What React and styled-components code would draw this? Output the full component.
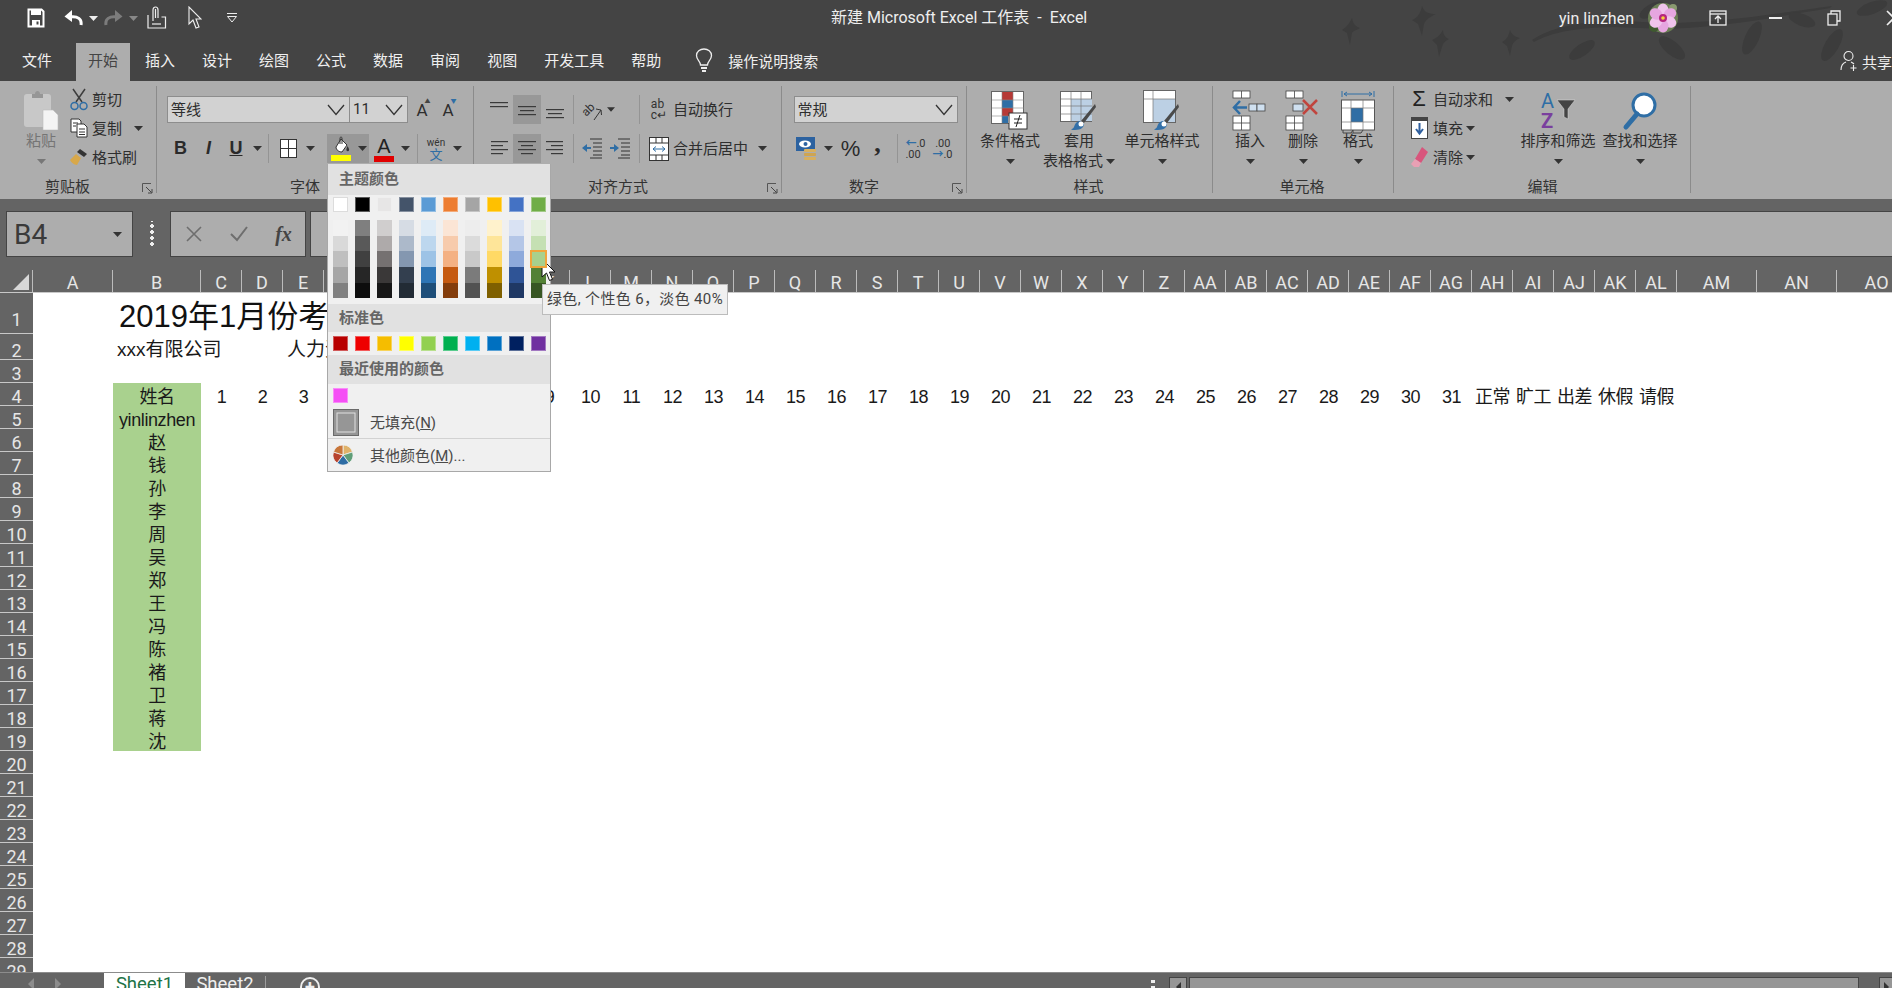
import React from 'react';
import styled, { createGlobalStyle } from 'styled-components';

const UI = '"Roboto","Noto Sans CJK SC",sans-serif';

const Global = createGlobalStyle`
  html, body { margin: 0; padding: 0; background: #fff; }
  * { box-sizing: border-box; }
`;

const colWidths = [80, 88, ...Array(36).fill(41), 80, 80, 80];
const colNames = ['A','B','C','D','E','F','G','H','I','J','K','L','M','N','O','P','Q','R','S','T','U','V','W','X','Y','Z','AA','AB','AC','AD','AE','AF','AG','AH','AI','AJ','AK','AL','AM','AN','AO'];
const people = ['yinlinzhen','赵','钱','孙','李','周','吴','郑','王','冯','陈','褚','卫','蒋','沈'];
const summary = ['正常','旷工','出差','休假','请假'];

const themeBase = ['#ffffff','#000000','#e7e6e6','#44546a','#5b9bd5','#ed7d31','#a5a5a5','#ffc000','#4472c4','#70ad47'];
const themeTints = [
  ['#f2f2f2','#d9d9d9','#bfbfbf','#a6a6a6','#808080'],
  ['#7f7f7f','#595959','#404040','#262626','#0d0d0d'],
  ['#d0cece','#aeaaaa','#757171','#3a3838','#171717'],
  ['#d6dce4','#acb9ca','#8497b0','#333f4f','#222b35'],
  ['#deebf6','#bdd7ee','#9dc3e6','#2e75b5','#1e4e79'],
  ['#fbe5d5','#f7cbac','#f4b183','#c55a11','#833c0b'],
  ['#ededed','#dbdbdb','#c9c9c9','#7b7b7b','#525252'],
  ['#fff2cc','#fee599','#ffd965','#bf9000','#7f6000'],
  ['#d9e2f3','#b4c6e7','#8eaadb','#2f5496','#1f3864'],
  ['#e2efd9','#c5e0b3','#a8d08d','#538135','#375623'],
];
const standard = ['#b80000','#ee0000','#f5bd00','#ffff00','#92d050','#00b050','#00b0f0','#0070c0','#002060','#7030a0'];

const Caret = ({ c = '#333' }) => (
  <svg width="9" height="5" viewBox="0 0 9 5"><path d="M0 0h9L4.5 5z" fill={c} /></svg>
);
const Chevron = () => (
  <svg width="18" height="12" viewBox="0 0 18 12"><path d="M1 1l8 9.5L17 1" fill="none" stroke="#333" strokeWidth="1.3" /></svg>
);
const Launcher = () => (
  <svg width="11" height="11" viewBox="0 0 11 11"><path d="M.5 9V.5H9" fill="none" stroke="#555" /><path d="M4 4l5.5 5.5M10 6v4H6" fill="none" stroke="#444" /></svg>
);
const Lines = ({ widths, top = 2, gap = 4, align = 'center' }) => (
  <svg width="18" height="22" viewBox="0 0 18 22">
    {widths.map((w, i) => {
      const x = align === 'left' ? 1 : align === 'right' ? 17 - w : 9 - w / 2;
      return <rect key={i} x={x} y={top + i * gap} width={w} height="1.2" fill="#3a3a3a" />;
    })}
  </svg>
);
const Brush = ({ x = 0, y = 0 }) => (
  <g transform={`translate(${x} ${y})`}>
    <path d="M24-6l1 3-12 16-3-2z" fill="#4a4a4a" />
    <path d="M9 11l4 3c0 3-3 6-9 6-2 0-3 0-4-.5 3-1 3-3 4-5 1-2 3-3.500 5-3.500z" fill="#3370a8" />
    <circle cx="10" cy="14" r="2.500" fill="#fff" />
  </g>
);

const IconSave = () => (
  <svg width="18" height="20" viewBox="0 0 18 20"><path d="M1.500 1.500h13l2 2v15h-15z" fill="none" stroke="#fff" strokeWidth="2" /><rect x="4" y="2" width="10" height="5" fill="#fff" /><rect x="5" y="12" width="8" height="6" fill="#fff" /><rect x="9.500" y="13.500" width="2" height="3" fill="#444" /></svg>
);
const IconUndo = ({ c = '#fff' }) => (
  <svg width="20" height="18" viewBox="0 0 20 18"><path d="M18 16c1-6-3-9-11-8" fill="none" stroke={c} strokeWidth="3" /><path d="M9 1L1.500 7.500 9 13z" fill={c} /></svg>
);
const IconRedo = () => (
  <svg width="20" height="18" viewBox="0 0 20 18"><path d="M2 16c-1-6 3-9 11-8" fill="none" stroke="#7c7c7c" strokeWidth="3" /><path d="M11 1l7.500 6.500L11 13z" fill="#7c7c7c" /></svg>
);
const IconTouch = () => (
  <svg width="20" height="24" viewBox="0 0 20 24" fill="none" stroke="#eee" strokeWidth="1.200"><path d="M1 9v13h17.500v-11h-4" /><path d="M6 15V4c0-4 5-4 5 0v8M8.500 3v9" /><path d="M5 18h9" /></svg>
);
const IconPointer = () => (
  <svg width="14" height="24" viewBox="0 0 14 24"><path d="M1 1v17l4-4 3 8 3-1-3-8h5z" fill="none" stroke="#eee" strokeWidth="1.100" /></svg>
);
const IconCustomize = () => (
  <svg width="12" height="10" viewBox="0 0 12 10"><path d="M1 .5h10" stroke="#eee" /><path d="M1.500 3.500h9L6 9z" fill="none" stroke="#eee" /></svg>
);
const IconBulb = () => (
  <svg width="18" height="25" viewBox="0 0 18 25" fill="none" stroke="#eee" strokeWidth="1.300"><path d="M5.500 17c0-4-4-5-4-9.500C1.500 3.500 5 1 9 1s7.500 2.500 7.500 6.500c0 4.500-4 5.500-4 9.500z" /><path d="M6 20h6M7 23h4" strokeWidth="2" /></svg>
);
const IconRibbonOpts = () => (
  <svg width="18" height="16" viewBox="0 0 18 16" fill="none" stroke="#eee" strokeWidth="1.300"><rect x="1" y="1" width="16" height="14" /><path d="M1 4h16" /><path d="M9 13V6M6 9l3-3 3 3" /></svg>
);
const IconRestore = () => (
  <svg width="14" height="16" viewBox="0 0 14 16" fill="none" stroke="#eee" strokeWidth="1.300"><rect x="1" y="4" width="9" height="11" /><path d="M4 4V1h9v10h-3" /></svg>
);
const IconPerson = () => (
  <svg width="18" height="22" viewBox="0 0 18 22" fill="none" stroke="#eee" strokeWidth="1.100"><circle cx="8.500" cy="6" r="4.500" /><path d="M1 20c0-4 2-7 5-8M11 12c1 .5 2 1 3 2" /><path d="M13.500 15v6M10.500 18h6" /></svg>
);
const IconAvatar = () => (
  <svg width="30" height="30" viewBox="0 0 30 30">
    <circle cx="15" cy="15" r="15" fill="#6b7f55" />
    <circle cx="6" cy="24" r="5" fill="#3f5a30" />
    <circle cx="25" cy="5" r="4" fill="#8a9a70" />
    {[0, 60, 120, 180, 240, 300].map(a => (
      <ellipse key={a} cx="15" cy="7" rx="5.500" ry="6.500" fill={a % 120 ? '#e6a6e0' : '#f0c4ec'} transform={`rotate(${a} 15 15)`} />
    ))}
    <circle cx="15" cy="15" r="4" fill="#b5267f" />
    <circle cx="15" cy="15" r="1.800" fill="#f4d23c" />
  </svg>
);
const IconPaste = () => (
  <svg width="36" height="40" viewBox="0 0 36 40">
    <rect x="1" y="4" width="27" height="33" rx="3" fill="#c8c8c8" />
    <path d="M9 4h3c0-4 5-4 5 0h3v4H9z" fill="#969696" />
    <path d="M20 20h10l5 5v15H20z" fill="#f4f4f4" stroke="#bdbdbd" strokeWidth=".6" />
  </svg>
);
const IconCut = () => (
  <svg width="18" height="23" viewBox="0 0 18 23" fill="none"><path d="M3 1l9 13M15 1L6 14" stroke="#3d3d3d" strokeWidth="1.500" /><circle cx="4.500" cy="18" r="3.500" stroke="#2f6ea5" strokeWidth="1.500" /><circle cx="13.500" cy="18" r="3.500" stroke="#2f6ea5" strokeWidth="1.500" /></svg>
);
const IconCopy = () => (
  <svg width="18" height="20" viewBox="0 0 18 20"><path d="M1 1h8l2 2v11H1z" fill="#fff" stroke="#333" /><path d="M7 6h7l3 3v10H7z" fill="#fff" stroke="#333" /><path d="M3 5h5M3 8h3M9 11h6M9 14h6M9 16.500h6" stroke="#333" /></svg>
);
const IconPainter = () => (
  <svg width="18" height="18" viewBox="0 0 18 18"><path d="M10 1l7 5-3 3-7-5z" fill="#333" /><path d="M6 6l5 4-4 7c-3 0-6-3-7-5z" fill="#d8a84a" /></svg>
);
const IconBorder = () => (
  <svg width="17" height="19" viewBox="0 0 17 19"><rect x=".5" y=".5" width="16" height="18" fill="#fff" stroke="#333" /><path d="M8.500 0v19M0 9.500h17" stroke="#333" /></svg>
);
const IconFill = () => (
  <svg width="20" height="25" viewBox="0 0 20 25">
    <path d="M10 3l6 6-5 7c-3 0-6-2-6-5z" fill="#fff" stroke="#333" />
    <path d="M9 8V2.500c0-2 2-2 2 0V8" fill="none" stroke="#333" />
    <path d="M16.500 10c1 2 2 3 1.500 4.500-.5 1-2 1-2.500 0-.4-1.500 .5-3 1-4.500z" fill="#333" />
    <rect y="19" width="20" height="6" fill="#ffff00" />
  </svg>
);
const IconOrient = () => (
  <svg width="22" height="24" viewBox="0 0 22 24">
    <text x="1" y="15" transform="rotate(-45 8 12)" fontFamily="Roboto" fontSize="12" fill="#333">ab</text>
    <path d="M13 22L20 12M15 11l5 1 .5 5" fill="none" stroke="#333" />
  </svg>
);
const IconOutdent = () => (
  <svg width="20" height="21" viewBox="0 0 20 21"><path d="M8 1h12M11 5h9M11 9h9M11 13h9M11 17h9M8 20h12" stroke="#333" /><path d="M0 10l5-4v3h4v2H5v3z" fill="#2f6ea5" /></svg>
);
const IconIndent = () => (
  <svg width="20" height="21" viewBox="0 0 20 21"><path d="M8 1h12M11 5h9M11 9h9M11 13h9M11 17h9M8 20h12" stroke="#333" /><path d="M9 10L4 6v3H0v2h4v3z" fill="#2f6ea5" /></svg>
);
const IconMerge = () => (
  <svg width="20" height="24" viewBox="0 0 20 24">
    <rect x=".5" y=".5" width="19" height="23" fill="#fff" stroke="#333" />
    <path d="M7 0v6M13 0v6M7 18v6M13 18v6M0 6h20M0 18h20" stroke="#333" />
    <path d="M4 12h12M4 12l3-2.500M4 12l3 2.500M16 12l-3-2.500M16 12l-3 2.500" fill="none" stroke="#2f6ea5" />
  </svg>
);
const IconCurrency = () => (
  <svg width="20" height="24" viewBox="0 0 20 24">
    <rect width="19" height="14" fill="#2c62a0" />
    <ellipse cx="9" cy="7" rx="6" ry="3.500" fill="#fff" />
    <circle cx="9.500" cy="7" r="2" fill="#2c62a0" />
    <rect x="8" y="12" width="12" height="3" rx="1" fill="#d8b060" />
    <rect x="8" y="16" width="12" height="3" rx="1" fill="#cfa552" />
    <rect x="8" y="20" width="12" height="3" rx="1" fill="#d8b060" />
  </svg>
);
const IconCondFormat = () => (
  <svg width="38" height="40" viewBox="0 0 38 40">
    <rect x=".5" y="1.500" width="32" height="32" fill="#fff" stroke="#666" />
    <rect x="11" y="2" width="11" height="8" fill="#b63a36" /><rect x="11" y="10" width="11" height="8" fill="#2f6ea5" />
    <rect x="11" y="18" width="11" height="8" fill="#b63a36" /><rect x="11" y="26" width="6" height="7" fill="#2f6ea5" />
    <path d="M11 2v31M22 2v31M1 10h32M1 18h32M1 26h32" stroke="#888" strokeWidth=".6" />
    <rect x="18" y="23" width="18" height="16" fill="#fff" stroke="#333" />
    <path d="M23 29h8M23 33h8M29 25l-4 12" stroke="#222" fill="none" />
  </svg>
);
const IconTableFormat = () => (
  <svg width="38" height="42" viewBox="0 0 38 42">
    <rect x=".5" y="1.500" width="31" height="30" fill="#fff" stroke="#666" />
    <rect x="11" y="9" width="21" height="22" fill="#bcd0e4" />
    <path d="M11 2v30M21 2v30M1 9h31M1 16h31M1 24h31" stroke="#777" strokeWidth=".7" />
    <Brush x="11" y="20" />
  </svg>
);
const IconCellStyle = () => (
  <svg width="38" height="42" viewBox="0 0 38 42">
    <rect x=".5" y=".5" width="32" height="32" fill="#fff" stroke="#666" />
    <rect x="10" y="9" width="22" height="23" fill="#bcd0e4" />
    <path d="M10 1v8M1 9h31M10 9v23" stroke="#777" strokeWidth=".7" />
    <Brush x="11" y="20" />
  </svg>
);
const CellBlocks = () => (
  <g fill="#fff" stroke="#444" strokeWidth=".8">
    <rect x="1" y="1" width="17" height="7" /><path d="M9.500 1v7" />
    <rect x="1" y="26" width="17" height="14" /><path d="M9.500 26v14M1 33h17" />
  </g>
);
const IconInsert = () => (
  <svg width="36" height="42" viewBox="0 0 36 42">
    <CellBlocks />
    <rect x="17" y="14" width="8" height="7" fill="#cfe0f0" stroke="#444" strokeWidth=".8" />
    <rect x="25" y="14" width="8" height="7" fill="#cfe0f0" stroke="#444" strokeWidth=".8" />
    <path d="M15 17.500H3M8 11l-6 6.500 6 6.500" fill="none" stroke="#2f6ea5" strokeWidth="2.500" />
  </svg>
);
const IconDelete = () => (
  <svg width="36" height="42" viewBox="0 0 36 42">
    <CellBlocks />
    <rect x="8" y="14" width="10" height="7" fill="#cfe0f0" stroke="#444" strokeWidth=".8" />
    <path d="M18 10l14 14M32 10L18 24" stroke="#c0453e" strokeWidth="2.500" />
  </svg>
);
const IconCellFormat = () => (
  <svg width="34" height="44" viewBox="0 0 34 44">
    <path d="M1 1v6M33 1v6M3 4h28M3 4l3-2M3 4l3 2M31 4l-3-2M31 4l-3 2" fill="none" stroke="#2f6ea5" />
    <rect x=".5" y="10" width="33" height="30" fill="#fff" stroke="#555" />
    <rect x="10" y="18" width="12" height="14" fill="#2f6ea5" />
    <path d="M10 10v30M22 10v30M1 18h33M1 32h33" stroke="#777" strokeWidth=".7" />
    <path d="M2 40v3h8l2-3M12 40v3h8l2-3" fill="none" stroke="#444" />
  </svg>
);
const IconFillDown = () => (
  <svg width="17" height="22" viewBox="0 0 17 22"><rect x=".5" y=".5" width="16" height="21" fill="#fff" stroke="#444" /><rect width="17" height="4" fill="#444" /><path d="M8.500 6v10M5 12l3.500 4.500L12 12" fill="none" stroke="#2f5f9e" strokeWidth="2" /></svg>
);
const IconEraser = () => (
  <svg width="17" height="20" viewBox="0 0 17 20"><path d="M11 0l6 5-7 11-6-4z" fill="#d8557c" /><path d="M4 12l6 4-2 4H3l-3-3z" fill="#e8a0b4" /></svg>
);
const IconSort = () => (
  <svg width="36" height="42" viewBox="0 0 36 42">
    <text x="1" y="18" fontFamily="Roboto" fontSize="20" fill="#2f6ea5">A</text>
    <text x="1" y="38" fontFamily="Roboto" fontSize="20" fontWeight="700" fill="#7a3f9e">Z</text>
    <path d="M17 10h18l-7 9v10l-4-2v-8z" fill="#444" stroke="#ddd" strokeWidth=".5" />
  </svg>
);
const IconFind = () => (
  <svg width="36" height="42" viewBox="0 0 36 42">
    <circle cx="22" cy="15" r="11" fill="#fff" stroke="#2f6ea5" strokeWidth="3" />
    <path d="M15 24L4 37" stroke="#2f6ea5" strokeWidth="5" strokeLinecap="round" />
  </svg>
);
const IconCross = () => (
  <svg width="16" height="16" viewBox="0 0 16 16"><path d="M1 1l14 14M15 1L1 15" stroke="#6e6e6e" strokeWidth="1.600" /></svg>
);
const IconCheck = () => (
  <svg width="18" height="16" viewBox="0 0 18 16"><path d="M1 8l6 6L17 1" fill="none" stroke="#6e6e6e" strokeWidth="2" /></svg>
);
const IconNoFill = () => (
  <svg width="26" height="27" viewBox="0 0 26 27"><rect x=".5" y=".5" width="25" height="26" fill="#969696" stroke="#6a6a6a" /><rect x="4" y="4" width="18" height="19" fill="none" stroke="#e0e0e0" /></svg>
);
const IconWheel = () => (
  <svg width="20" height="20" viewBox="0 0 20 20" stroke="#f0f0f0" strokeWidth=".8">
    <path d="M10 10L10 0A10 10 0 0 1 19.500 7z" fill="#dfb26a" />
    <path d="M10 10L19.500 7A10 10 0 0 1 15.900 18z" fill="#5f9e78" />
    <path d="M10 10L15.900 18A10 10 0 0 1 4.100 18z" fill="#2e6ca4" />
    <path d="M10 10L4.100 18A10 10 0 0 1 .5 7z" fill="#b8432e" />
    <path d="M10 10L.5 7A10 10 0 0 1 10 0z" fill="#c8763a" />
  </svg>
);
const IconCursor = () => (
  <svg width="15" height="24" viewBox="0 0 15 24"><path d="M1 1v18l4.500-4 3 7.500 3-1.200-3-7.300H14z" fill="#fff" stroke="#111" /></svg>
);
const TitleDecor = () => (
  <svg width="560" height="81" viewBox="0 0 560 81" fill="#3c3c3c">
    <path d="M10 30c6-4 8-8 10-12 1 6 3 8 8 10-3 2-6 2-8 5l-2 12-3-12z" />
    <path d="M80 20c6-2 9-8 10-14 2 6 6 8 14 8-6 3-10 5-12 10l-2 12-4-12z" />
    <path d="M100 40c5-2 8-5 11-10 0 5 3 8 6 9-4 2-6 4-7 8l-3 10-2-12z" />
    <path d="M170 42c6-3 7-8 8-12 2 5 5 7 10 8-4 2-7 4-8 8l-2 10-3-10z" />
    <path d="M200 40c20-14 60-22 110-18 60 4 130-8 190-16l-2 2c-60 10-130 24-190 20-50-3-85 2-106 14z" />
    <ellipse cx="250" cy="50" rx="15" ry="6" transform="rotate(-35 250 50)" />
    <ellipse cx="320" cy="10" rx="14" ry="6" transform="rotate(-30 320 10)" />
    <ellipse cx="340" cy="48" rx="16" ry="7" transform="rotate(40 340 48)" />
    <ellipse cx="420" cy="38" rx="18" ry="7" transform="rotate(-65 420 38)" />
    <ellipse cx="470" cy="20" rx="14" ry="6" transform="rotate(20 470 20)" />
    <ellipse cx="500" cy="45" rx="18" ry="7" transform="rotate(-60 500 45)" />
    <ellipse cx="540" cy="8" rx="16" ry="6" transform="rotate(-20 540 8)" />
  </svg>
);

function ColorPopup() {
  return (
    <Popup>
      <PopupHeading>主题颜色</PopupHeading>
      <SwatchRow $top={2}>
        {themeBase.map(c => <Swatch key={c} $c={c} />)}
      </SwatchRow>
      <SwatchRow $top={8}>
        {themeTints.map((col, i) => (
          <TintColumn key={i}>
            {col.map(c => <Tint key={c} $c={c} $active={c === '#a8d08d'} />)}
          </TintColumn>
        ))}
      </SwatchRow>
      <PopupHeading $h={28} $top={6}>标准色</PopupHeading>
      <SwatchRow $top={4}>
        {standard.map(c => <Swatch key={c} $c={c} />)}
      </SwatchRow>
      <PopupHeading $h={29} $top={4}>最近使用的颜色</PopupHeading>
      <SwatchRow $top={4}>
        <Swatch $c="#f54ff5" />
      </SwatchRow>
      <PopupItem $top={5} $h={28}>
        <IconNoFill />
        <PopupItemText $gap={11}>无填充(<u>N</u>)</PopupItemText>
      </PopupItem>
      <PopupRule />
      <PopupItem $h={32}>
        <IconWheel />
        <PopupItemText $gap={17}>其他颜色(<u>M</u>)...</PopupItemText>
      </PopupItem>
    </Popup>
  );
}

function SheetRow({ label, h, lift, children }) {
  return (
    <Row $h={h}>
      <RowHead $lift={lift}>{label}</RowHead>
      {children}
    </Row>
  );
}

export default function App() {
  const rowsBelow = Array.from({ length: 10 }, (_, i) => 20 + i);

  return (
    <Page>
      <Global />
      <TopBand>
        <DecorLayer><TitleDecor /></DecorLayer>
        <TitleBar>
          <Qat>
            <QatSlot $w={28}><IconSave /></QatSlot>
            <QatSlot $w={30} $ml={8}><IconUndo /></QatSlot>
            <QatSlot $w={10}><Caret c="#eee" /></QatSlot>
            <QatSlot $w={24} $ml={4}><IconRedo /></QatSlot>
            <QatSlot $w={14}><Caret c="#888" /></QatSlot>
            <QatSlot $w={22} $ml={6}><IconTouch /></QatSlot>
            <QatSlot $w={22} $ml={16}><IconPointer /></QatSlot>
            <QatSlot $w={16} $ml={18}><IconCustomize /></QatSlot>
          </Qat>
          <WindowTitle>新建 Microsoft Excel 工作表&nbsp; - &nbsp;Excel</WindowTitle>
          <WindowControls>
            <UserName>yin linzhen</UserName>
            <IconAvatar />
            <ControlSlot $ml={28}><IconRibbonOpts /></ControlSlot>
            <ControlSlot $ml={33}><MinimizeBar /></ControlSlot>
            <ControlSlot $ml={35}><IconRestore /></ControlSlot>
            <ControlSlot $ml={36}><IconCross /></ControlSlot>
          </WindowControls>
        </TitleBar>
        <TabBar>
          {['文件','开始','插入','设计','绘图','公式','数据','审阅','视图','开发工具','帮助'].map((t, i) => (
            <Tab key={t} $active={t === '开始'} $first={i === 0}>{t}</Tab>
          ))}
          <SearchHint>
            <IconBulb />
            <span>操作说明搜索</span>
          </SearchHint>
          <ShareButton>
            <IconPerson />
            <span>共享</span>
          </ShareButton>
        </TabBar>
      </TopBand>

      <Ribbon>
        <Group $w={157}>
          <GroupBody>
            <BigColumn $w={66} $pl={8} $dim>
              <BigIcon><IconPaste /></BigIcon>
              <BigText>粘贴</BigText>
              <BigText><Caret c="#777" /></BigText>
            </BigColumn>
            <SmallColumn>
              <SmallRow><IconSlot $w={26}><IconCut /></IconSlot><SmallLabel>剪切</SmallLabel></SmallRow>
              <SmallRow><IconSlot $w={26}><IconCopy /></IconSlot><SmallLabel>复制</SmallLabel><CaretSlot $ml={12}><Caret /></CaretSlot></SmallRow>
              <SmallRow><IconSlot $w={26}><IconPainter /></IconSlot><SmallLabel>格式刷</SmallLabel></SmallRow>
            </SmallColumn>
          </GroupBody>
          <GroupLabel $pr={22}>剪贴板</GroupLabel>
          <LauncherSlot><Launcher /></LauncherSlot>
        </Group>

        <Group $w={317}>
          <RowsBody $pl={10} $pt={15}>
            <ControlRow $h={27}>
              <Field $w={183}><SmallLabel>等线</SmallLabel><Chevron /></Field>
              <Field $w={59}><SmallLabel>11</SmallLabel><Chevron /></Field>
              <IconSlot $w={26} $ml={2}><BumpA>A<BumpMark>▲</BumpMark></BumpA></IconSlot>
              <IconSlot $w={26}><BumpA>A<BumpMark $blue>▼</BumpMark></BumpA></IconSlot>
            </ControlRow>
            <ControlRow $h={29} $top={11}>
              <IconSlot $w={27}><Glyph $bold>B</Glyph></IconSlot>
              <IconSlot $w={29}><Glyph $italic $bold>I</Glyph></IconSlot>
              <IconSlot $w={26}><Glyph $under $bold>U</Glyph></IconSlot>
              <IconSlot $w={17}><Caret /></IconSlot>
              <Divider $w={5} />
              <IconSlot $w={34}><IconBorder /></IconSlot>
              <IconSlot $w={10}><Caret /></IconSlot>
              <IconSlot $w={12} />
              <PressedButton $w={42}>
                <IconSlot $w={28}><IconFill /></IconSlot>
                <IconSlot $w={14}><Caret /></IconSlot>
              </PressedButton>
              <IconSlot $w={30}><FontColor>A</FontColor></IconSlot>
              <IconSlot $w={12}><Caret /></IconSlot>
              <Divider $w={12} />
              <IconSlot $w={26}><Phonetic>wén<PhoneticHan>文</PhoneticHan></Phonetic></IconSlot>
              <IconSlot $w={16}><Caret /></IconSlot>
            </ControlRow>
          </RowsBody>
          <GroupLabel $pr={21}>字体</GroupLabel>
          <LauncherSlot $hidden><Launcher /></LauncherSlot>
        </Group>

        <Group $w={308}>
          <RowsBody $pl={11} $pt={14}>
            <ControlRow $h={29}>
              <IconSlot $w={28}><Lines widths={[18, 18]} top={3} /></IconSlot>
              <PressedButton $w={28} $center><Lines widths={[18, 14, 18]} top={7} /></PressedButton>
              <IconSlot $w={28}><Lines widths={[18, 14, 18]} top={10} /></IconSlot>
              <Divider $w={8} />
              <IconSlot $w={30}><IconOrient /></IconSlot>
              <IconSlot $w={8}><Caret /></IconSlot>
              <Divider $w={10} $ml={19} />
              <IconSlot $w={24} $ml={3}><Wrap>ab<br />c↵</Wrap></IconSlot>
              <SmallLabel $ml={2}>自动换行</SmallLabel>
            </ControlRow>
            <ControlRow $h={29} $top={10}>
              <IconSlot $w={28}><Lines widths={[18, 12, 18, 12]} align="left" top={3} /></IconSlot>
              <PressedButton $w={28} $center><Lines widths={[18, 12, 18, 12]} top={3} /></PressedButton>
              <IconSlot $w={28}><Lines widths={[18, 12, 18, 12]} align="right" top={3} /></IconSlot>
              <Divider $w={8} />
              <IconSlot $w={29}><IconOutdent /></IconSlot>
              <IconSlot $w={28}><IconIndent /></IconSlot>
              <Divider $w={10} />
              <IconSlot $w={24} $ml={3}><IconMerge /></IconSlot>
              <SmallLabel $ml={2}>合并后居中</SmallLabel>
              <CaretSlot $ml={10}><Caret /></CaretSlot>
            </ControlRow>
          </RowsBody>
          <GroupLabel $pr={20}>对齐方式</GroupLabel>
          <LauncherSlot><Launcher /></LauncherSlot>
        </Group>

        <Group $w={185}>
          <RowsBody $pl={11.5} $pt={15}>
            <ControlRow $h={27}>
              <Field $w={164}><SmallLabel>常规</SmallLabel><Chevron /></Field>
            </ControlRow>
            <ControlRow $h={29} $top={11}>
              <IconSlot $w={25}><IconCurrency /></IconSlot>
              <IconSlot $w={20}><Caret /></IconSlot>
              <IconSlot $w={24}><Glyph $big>%</Glyph></IconSlot>
              <IconSlot $w={30}><Comma>,</Comma></IconSlot>
              <Divider $w={10} />
              <IconSlot $w={26}><Decimal><b>←</b>.0<br />.00</Decimal></IconSlot>
              <IconSlot $w={28}><Decimal>&nbsp;.00<br /><b>→</b>.0</Decimal></IconSlot>
            </ControlRow>
          </RowsBody>
          <GroupLabel $pr={21}>数字</GroupLabel>
          <LauncherSlot><Launcher /></LauncherSlot>
        </Group>

        <Group $w={246}>
          <GroupBody $pl={10}>
            <BigColumn $w={66}>
              <BigIcon><IconCondFormat /></BigIcon>
              <BigText>条件格式</BigText>
              <BigText><Caret /></BigText>
            </BigColumn>
            <BigColumn $w={72}>
              <BigIcon><IconTableFormat /></BigIcon>
              <BigText>套用</BigText>
              <BigText>表格格式<CaretSlot $ml={3}><Caret /></CaretSlot></BigText>
            </BigColumn>
            <BigColumn $w={94}>
              <BigIcon><IconCellStyle /></BigIcon>
              <BigText>单元格样式</BigText>
              <BigText><Caret /></BigText>
            </BigColumn>
          </GroupBody>
          <GroupLabel $pr={3}>样式</GroupLabel>
        </Group>

        <Group $w={181}>
          <GroupBody $pl={7}>
            <BigColumn $w={60}>
              <BigIcon><IconInsert /></BigIcon>
              <BigText>插入</BigText>
              <BigText><Caret /></BigText>
            </BigColumn>
            <BigColumn $w={46}>
              <BigIcon><IconDelete /></BigIcon>
              <BigText>删除</BigText>
              <BigText><Caret /></BigText>
            </BigColumn>
            <BigColumn $w={64}>
              <BigIcon><IconCellFormat /></BigIcon>
              <BigText>格式</BigText>
              <BigText><Caret /></BigText>
            </BigColumn>
          </GroupBody>
          <GroupLabel $pr={3}>单元格</GroupLabel>
        </Group>

        <Group $w={297}>
          <GroupBody $pl={13}>
            <SmallColumn $w={110}>
              <SmallRow><IconSlot $w={24} $ml={0}><Sigma>Σ</Sigma></IconSlot><SmallLabel $ml={2}>自动求和</SmallLabel><CaretSlot $ml={12}><Caret /></CaretSlot></SmallRow>
              <SmallRow><IconSlot $w={24}><IconFillDown /></IconSlot><SmallLabel $ml={2}>填充</SmallLabel><CaretSlot $ml={3}><Caret /></CaretSlot></SmallRow>
              <SmallRow><IconSlot $w={24}><IconEraser /></IconSlot><SmallLabel $ml={2}>清除</SmallLabel><CaretSlot $ml={3}><Caret /></CaretSlot></SmallRow>
            </SmallColumn>
            <BigColumn $w={82}>
              <BigIcon><IconSort /></BigIcon>
              <BigText>排序和筛选</BigText>
              <BigText><Caret /></BigText>
            </BigColumn>
            <BigColumn $w={82}>
              <BigIcon><IconFind /></BigIcon>
              <BigText>查找和选择</BigText>
              <BigText><Caret /></BigText>
            </BigColumn>
          </GroupBody>
          <GroupLabel>编辑</GroupLabel>
        </Group>
      </Ribbon>

      <FormulaBar>
        <NameBox>B4<Caret /></NameBox>
        <FormulaDots />
        <FuncBox>
          <IconSlot $w={45}><IconCross /></IconSlot>
          <IconSlot $w={45}><IconCheck /></IconSlot>
          <IconSlot $w={45}><FxMark>fx</FxMark></IconSlot>
        </FuncBox>
        <FormulaInput />
      </FormulaBar>

      <ColumnHeader>
        <Corner />
        {colNames.map((n, i) => <ColumnHead key={n} $w={colWidths[i]}>{n}</ColumnHead>)}
      </ColumnHeader>

      <SheetBody>
        <SheetRow label="1" h={41} lift={5}>
          <Cell $w={colWidths[0]} />
          <TitleCell>2019年1月份考勤表</TitleCell>
        </SheetRow>
        <SheetRow label="2" h={26}>
          <Cell $w={colWidths[0]} />
          <TextCell $w={colWidths[1]}>xxx有限公司</TextCell>
          <Cell $w={colWidths[2]} />
          <Cell $w={colWidths[3]} />
          <TextCell $w={colWidths[4]} $pl={4}>人力资源部</TextCell>
        </SheetRow>
        <SheetRow label="3" />
        <SheetRow label="4">
          <Cell $w={colWidths[0]} />
          <Cell $w={colWidths[1]} $green>姓名</Cell>
          {Array.from({ length: 31 }, (_, i) => <Cell key={i} $w={41}>{i + 1}</Cell>)}
          {summary.map(s => <Cell key={s} $w={41}>{s}</Cell>)}
        </SheetRow>
        {people.map((name, i) => (
          <SheetRow key={name} label={i + 5}>
            <Cell $w={colWidths[0]} />
            <Cell $w={colWidths[1]} $green>{name}</Cell>
          </SheetRow>
        ))}
        {rowsBelow.map(n => <SheetRow key={n} label={n} />)}
      </SheetBody>

      <BottomBar>
        <SheetNav>
          <NavArrow $left />
          <NavArrow />
        </SheetNav>
        <SheetTab $active>Sheet1</SheetTab>
        <SheetTab>Sheet2</SheetTab>
        <AddSheet>+</AddSheet>
        <ScrollDots />
        <ScrollButton $w={18}><ScrollArrow $left /></ScrollButton>
        <ScrollThumb />
        <ScrollButton $w={15}><ScrollArrow /></ScrollButton>
      </BottomBar>

      <ColorPopup />
      <Tooltip>绿色, 个性色 6，淡色 40%</Tooltip>
      <CursorMark><IconCursor /></CursorMark>
    </Page>
  );
}

const Page = styled.div`
  position: relative;
  width: 1892px;
  height: 988px;
  overflow: hidden;
  display: flex;
  flex-direction: column;
  background: #fff;
  font-family: ${UI};
  font-size: 15px;
  color: #2e2e2e;
`;

const TopBand = styled.div`
  position: relative;
  background: #444;
  flex: none;
`;

const DecorLayer = styled.div`
  position: absolute;
  right: 0;
  top: 0;
  line-height: 0;
`;

const TitleBar = styled.div`
  position: relative;
  height: 43px;
  display: grid;
  grid-template-columns: 831px auto 1fr;
  align-items: start;
`;

const Qat = styled.div`
  display: flex;
  align-items: center;
  height: 36px;
  padding-left: 22px;
`;

const QatSlot = styled.div`
  width: ${p => p.$w}px;
  margin-left: ${p => p.$ml || 0}px;
  display: flex;
  justify-content: center;
  align-items: center;
`;

const WindowTitle = styled.div`
  color: #eee;
  font-size: 16px;
  line-height: 36px;
  white-space: pre;
`;

const WindowControls = styled.div`
  display: flex;
  align-items: center;
  justify-content: flex-end;
  height: 36px;
  margin-right: -14px;
`;

const UserName = styled.div`
  color: #eee;
  font-size: 16px;
  margin-right: 14px;
`;

const ControlSlot = styled.div`
  width: 24px;
  margin-left: ${p => p.$ml || 0}px;
  display: flex;
  justify-content: center;
  & path[stroke="#6e6e6e"] { stroke: #eee; }
`;

const MinimizeBar = styled.div`
  width: 13px;
  height: 2px;
  background: #eee;
`;

const TabBar = styled.div`
  position: relative;
  height: 38px;
  display: flex;
  padding-left: 10px;
  gap: 3px;
`;

const Tab = styled.div`
  height: 38px;
  padding: 0 12px;
  margin-right: ${p => (p.$first ? 9 : 0)}px;
  line-height: 36px;
  font-size: 15px;
  background: ${p => (p.$active ? '#adadad' : 'transparent')};
  color: ${p => (p.$active ? '#444' : '#f0f0f0')};
`;

const SearchHint = styled.div`
  display: flex;
  align-items: center;
  gap: 15px;
  margin-left: 19px;
  padding-bottom: 2px;
  color: #eee;
  height: 36px;
`;

const ShareButton = styled.div`
  display: flex;
  align-items: center;
  gap: 4px;
  margin-left: auto;
  margin-right: 0;
  color: #eee;
  height: 36px;
`;

const Ribbon = styled.div`
  display: flex;
  height: 118px;
  flex: none;
  background: #adadad;
`;

const Group = styled.section`
  position: relative;
  width: ${p => p.$w}px;
  flex: none;
  display: flex;
  flex-direction: column;
  &::after {
    content: '';
    position: absolute;
    right: 0;
    top: 5px;
    bottom: 6px;
    width: 1px;
    background: #8b8b8b;
  }
`;

const GroupBody = styled.div`
  display: flex;
  padding-left: ${p => p.$pl || 0}px;
`;

const RowsBody = styled.div`
  padding: ${p => p.$pt}px 0 0 ${p => p.$pl}px;
`;

const GroupLabel = styled.div`
  margin-top: auto;
  padding: 0 ${p => p.$pr || 0}px 5px 0;
  line-height: 14px;
  text-align: center;
  color: #333;
`;

const LauncherSlot = styled.div`
  position: absolute;
  right: 4px;
  bottom: 5px;
  line-height: 0;
  visibility: ${p => (p.$hidden ? 'hidden' : 'visible')};
`;

const BigColumn = styled.div`
  width: ${p => p.$w + (p.$pl || 0)}px;
  padding: 9px 0 0 ${p => p.$pl || 0}px;
  display: flex;
  flex-direction: column;
  align-items: center;
  color: ${p => (p.$dim ? '#757575' : 'inherit')};
  white-space: nowrap;
`;

const BigIcon = styled.div`
  height: 41px;
  display: flex;
  align-items: flex-start;
  justify-content: center;
`;

const BigText = styled.div`
  height: 20px;
  line-height: 20px;
  display: flex;
  align-items: center;
  justify-content: center;
`;

const SmallColumn = styled.div`
  width: ${p => (p.$w ? `${p.$w}px` : 'auto')};
  padding-top: 3.5px;
  margin-left: ${p => (p.$w ? 0 : -8)}px;
`;

const SmallRow = styled.div`
  height: 29px;
  display: flex;
  align-items: center;
  white-space: nowrap;
`;

const IconSlot = styled.div`
  width: ${p => p.$w}px;
  margin-left: ${p => p.$ml || 0}px;
  height: 100%;
  flex: none;
  display: flex;
  align-items: center;
  justify-content: center;
`;

const CaretSlot = styled.span`
  margin-left: ${p => p.$ml || 0}px;
  display: inline-flex;
  align-items: center;
`;

const SmallLabel = styled.span`
  margin-left: ${p => p.$ml || 0}px;
  padding-bottom: 2px;
  white-space: nowrap;
`;

const ControlRow = styled.div`
  height: ${p => p.$h}px;
  margin-top: ${p => p.$top || 0}px;
  display: flex;
  align-items: center;
`;

const Field = styled.div`
  width: ${p => p.$w}px;
  height: 100%;
  flex: none;
  margin-right: -1px;
  background: #d2d2d2;
  border: 1px solid #8d8d8d;
  padding: 0 4px 0 3px;
  display: flex;
  align-items: center;
  justify-content: space-between;
`;

const BumpA = styled.span`
  position: relative;
  font-size: 17px;
`;

const BumpMark = styled.span`
  position: absolute;
  left: 8px;
  top: -4px;
  font-size: 6px;
  color: ${p => (p.$blue ? '#2f6ea5' : '#444')};
`;

const Glyph = styled.span`
  font-family: "Liberation Sans", sans-serif;
  font-size: ${p => (p.$big ? 22 : 18)}px;
  font-weight: ${p => (p.$bold ? 700 : 400)};
  font-style: ${p => (p.$italic ? 'italic' : 'normal')};
  text-decoration: ${p => (p.$under ? 'underline' : 'none')};
  color: #2a2a2a;
`;

const Comma = styled.span`
  font-family: "Liberation Serif", serif;
  font-size: 26px;
  font-weight: 700;
  line-height: 14px;
  padding-bottom: 10px;
  color: #2a2a2a;
`;

const PressedButton = styled.div`
  width: ${p => p.$w}px;
  height: 100%;
  flex: none;
  display: flex;
  align-items: center;
  justify-content: ${p => (p.$center ? 'center' : 'flex-start')};
  background: #989898;
`;

const FontColor = styled.span`
  display: inline-block;
  width: 20px;
  font-family: "Liberation Sans", sans-serif;
  font-size: 20px;
  line-height: 20px;
  text-align: center;
  color: #222;
  border-bottom: 6px solid #e00000;
`;

const Phonetic = styled.span`
  display: flex;
  flex-direction: column;
  align-items: center;
  font-size: 10px;
  line-height: 11px;
  color: #333;
`;

const PhoneticHan = styled.span`
  font-size: 13px;
  line-height: 13px;
  color: #2f6ea5;
`;

const Divider = styled.div`
  width: ${p => p.$w}px;
  margin-left: ${p => p.$ml || 0}px;
  height: 100%;
  flex: none;
  display: flex;
  justify-content: center;
  &::before {
    content: '';
    width: 1px;
    background: #949494;
  }
`;

const Wrap = styled.span`
  font-size: 12px;
  line-height: 11px;
  color: #333;
`;

const Decimal = styled.span`
  font-size: 11px;
  line-height: 11px;
  color: #333;
  white-space: nowrap;
  & b { color: #2f6ea5; }
`;

const Sigma = styled.span`
  font-family: "Liberation Sans", sans-serif;
  font-size: 22px;
  color: #222;
`;

const FormulaBar = styled.div`
  height: 71px;
  flex: none;
  background: #646464;
  padding: 12px 0 13px 6px;
  display: flex;
`;

const NameBox = styled.div`
  width: 127px;
  background: #adadad;
  border: 1px solid #444;
  padding: 0 10px 0 7px;
  display: flex;
  align-items: center;
  justify-content: space-between;
  font-size: 28px;
  color: #3a3a3a;
`;

const FormulaDots = styled.div`
  width: 37px;
  background:
    radial-gradient(circle, #eee 1.600px, transparent 2px) center 14px / 4px 6px repeat-y;
  margin: 10px 0;
`;

const FuncBox = styled.div`
  width: 136px;
  background: #adadad;
  border: 1px solid #444;
  display: flex;
`;

const FxMark = styled.span`
  font-family: "Liberation Serif", serif;
  font-style: italic;
  font-weight: 700;
  font-size: 20px;
  color: #444;
`;

const FormulaInput = styled.div`
  flex: 1;
  margin-left: 4px;
  background: #adadad;
  border-top: 1px solid #444;
  border-bottom: 1px solid #444;
  border-left: 1px solid #444;
`;

const ColumnHeader = styled.div`
  height: 23px;
  flex: none;
  display: flex;
  background: #646464;
  border-bottom: 1px solid #c8c8c8;
  overflow: hidden;
`;

const Corner = styled.div`
  width: 33px;
  flex: none;
  border-right: 1px solid #bcbcbc;
  position: relative;
  &::after {
    content: '';
    position: absolute;
    right: 3px;
    bottom: 2px;
    border-style: solid;
    border-width: 0 0 16px 16px;
    border-color: transparent transparent #d8d8d8 transparent;
  }
`;

const ColumnHead = styled.div`
  width: ${p => p.$w}px;
  flex: none;
  border-right: 1px solid #bcbcbc;
  text-align: center;
  color: #e6e6e6;
  font-size: 18px;
  line-height: 25px;
`;

const SheetBody = styled.div`
  flex: 1;
  min-height: 0;
  overflow: hidden;
`;

const Row = styled.div`
  height: ${p => p.$h || 23}px;
  display: flex;
`;

const RowHead = styled.div`
  width: 33px;
  flex: none;
  background: #646464;
  border-bottom: 1px solid #c8c8c8;
  padding-bottom: ${p => p.$lift || 0}px;
  display: flex;
  align-items: flex-end;
  justify-content: center;
  color: #e6e6e6;
  font-size: 18px;
  line-height: 17px;
`;

const Cell = styled.div`
  width: ${p => p.$w}px;
  flex: none;
  background: ${p => (p.$green ? '#a9d18e' : 'transparent')};
  text-align: center;
  font-family: "Liberation Sans", "Noto Sans CJK SC", sans-serif;
  font-size: 18px;
  line-height: 29px;
  letter-spacing: -0.4px;
  color: #1a1a1a;
  white-space: nowrap;
`;

const TitleCell = styled.div`
  padding: 5px 0 0 6px;
  font-family: "Liberation Sans", "Noto Sans CJK SC", sans-serif;
  font-size: 31px;
  line-height: 38px;
  color: #111;
  white-space: nowrap;
`;

const TextCell = styled.div`
  width: ${p => p.$w}px;
  flex: none;
  padding-left: ${p => p.$pl ?? 4}px;
  font-family: "Liberation Sans", "Noto Sans CJK SC", sans-serif;
  font-size: 19px;
  line-height: 32px;
  color: #1a1a1a;
  white-space: nowrap;
`;

const BottomBar = styled.div`
  height: 16px;
  flex: none;
  display: flex;
  background: #646464;
  border-top: 1px solid #8c8c8c;
  overflow: hidden;
`;

const SheetNav = styled.div`
  width: 104px;
  flex: none;
  display: flex;
  gap: 21px;
  padding: 5px 0 0 26px;
`;

const NavArrow = styled.div`
  width: 0;
  height: 0;
  border-style: solid;
  border-width: 6px;
  border-color: transparent;
  ${p => (p.$left ? 'border-right-color: #8c8c8c; margin-left: -4px;' : 'border-left-color: #8c8c8c;')}
`;

const SheetTab = styled.div`
  width: 81px;
  flex: none;
  margin-top: ${p => (p.$active ? -1 : 0)}px;
  background: ${p => (p.$active ? '#fff' : 'transparent')};
  color: ${p => (p.$active ? '#217346' : '#eee')};
  font-size: 18.5px;
  line-height: 22px;
  height: 26px;
  padding-top: ${p => (p.$active ? 1 : 0)}px;
  text-align: center;
  ${p => (p.$active ? '' : 'border-right: 1px solid #9c9c9c; margin-top: 3px; line-height: 16px; height: 22px;')}
`;

const AddSheet = styled.div`
  width: 20px;
  height: 20px;
  flex: none;
  margin: 4px 0 0 34px;
  border: 2px solid #eee;
  border-radius: 50%;
  color: #eee;
  font-weight: 700;
  font-size: 18px;
  line-height: 15px;
  text-align: center;
`;

const ScrollDots = styled.div`
  width: 4px;
  flex: none;
  margin: 7px 0 0 831px;
  background: repeating-linear-gradient(#eee 0 3px, transparent 3px 6px);
`;

const ScrollButton = styled.div`
  width: ${p => p.$w}px;
  flex: none;
  margin: 4px 0 0 ${p => (p.$w === 18 ? 14 : 20)}px;
  background: #969696;
  border: 1px solid #444;
  border-width: 1px 1px 0 1px;
  display: flex;
  justify-content: center;
`;

const ScrollArrow = styled.div`
  width: 0;
  height: 0;
  margin-top: 4px;
  border-style: solid;
  border-width: 5px;
  border-color: transparent;
  ${p => (p.$left ? 'border-right-color: #333; margin-left: -5px;' : 'border-left-color: #333; margin-left: 5px;')}
`;

const ScrollThumb = styled.div`
  width: 670px;
  flex: none;
  margin: 4px 0 0 2px;
  background: #969696;
  border: 1px solid #444;
  border-width: 1px 1px 0 1px;
`;

const Popup = styled.div`
  position: absolute;
  left: 327px;
  top: 164px;
  width: 224px;
  height: 308px;
  background: #f0f0f0;
  border: 1px solid #a8a8a8;
  border-top: none;
`;

const PopupHeading = styled.div`
  height: ${p => p.$h || 31}px;
  margin-top: ${p => p.$top || 0}px;
  background: #e1e1e1;
  padding-left: 11px;
  line-height: ${p => p.$h || 31}px;
  font-weight: 700;
  color: #666;
`;

const SwatchRow = styled.div`
  margin-top: ${p => p.$top}px;
  padding-left: 4.5px;
  display: grid;
  grid-template-columns: repeat(10, 15px);
  column-gap: 7px;
`;

const Swatch = styled.div`
  height: 15px;
  background: ${p => p.$c};
  border: 1px solid ${p => (p.$c === '#ffffff' ? '#dcdcdc' : 'rgba(255,255,255,.35)')};
`;

const TintColumn = styled.div`
  display: flex;
  flex-direction: column;
`;

const Tint = styled.div`
  height: 15.7px;
  background: ${p => p.$c};
  outline: ${p => (p.$active ? '2px solid #f0a53c' : 'none')};
  outline-offset: -1px;
  position: relative;
  z-index: ${p => (p.$active ? 1 : 0)};
`;

const PopupItem = styled.div`
  height: ${p => p.$h}px;
  margin-top: ${p => p.$top || 0}px;
  padding-left: 5px;
  display: flex;
  align-items: center;
  color: #4a4a4a;
`;

const PopupItemText = styled.span`
  margin-left: ${p => p.$gap || 12}px;
  padding-bottom: 2px;
`;

const PopupRule = styled.div`
  height: 1px;
  margin-top: 2px;
  background: #d2d2d2;
`;

const Tooltip = styled.div`
  position: absolute;
  left: 542px;
  top: 284px;
  width: 186px;
  height: 31px;
  background: #f0f0f0;
  border: 1px solid #bcbcbc;
  padding-left: 4px;
  line-height: 29px;
  letter-spacing: .35px;
  color: #444;
  white-space: nowrap;
`;

const CursorMark = styled.div`
  position: absolute;
  left: 541px;
  top: 258px;
  line-height: 0;
`;
